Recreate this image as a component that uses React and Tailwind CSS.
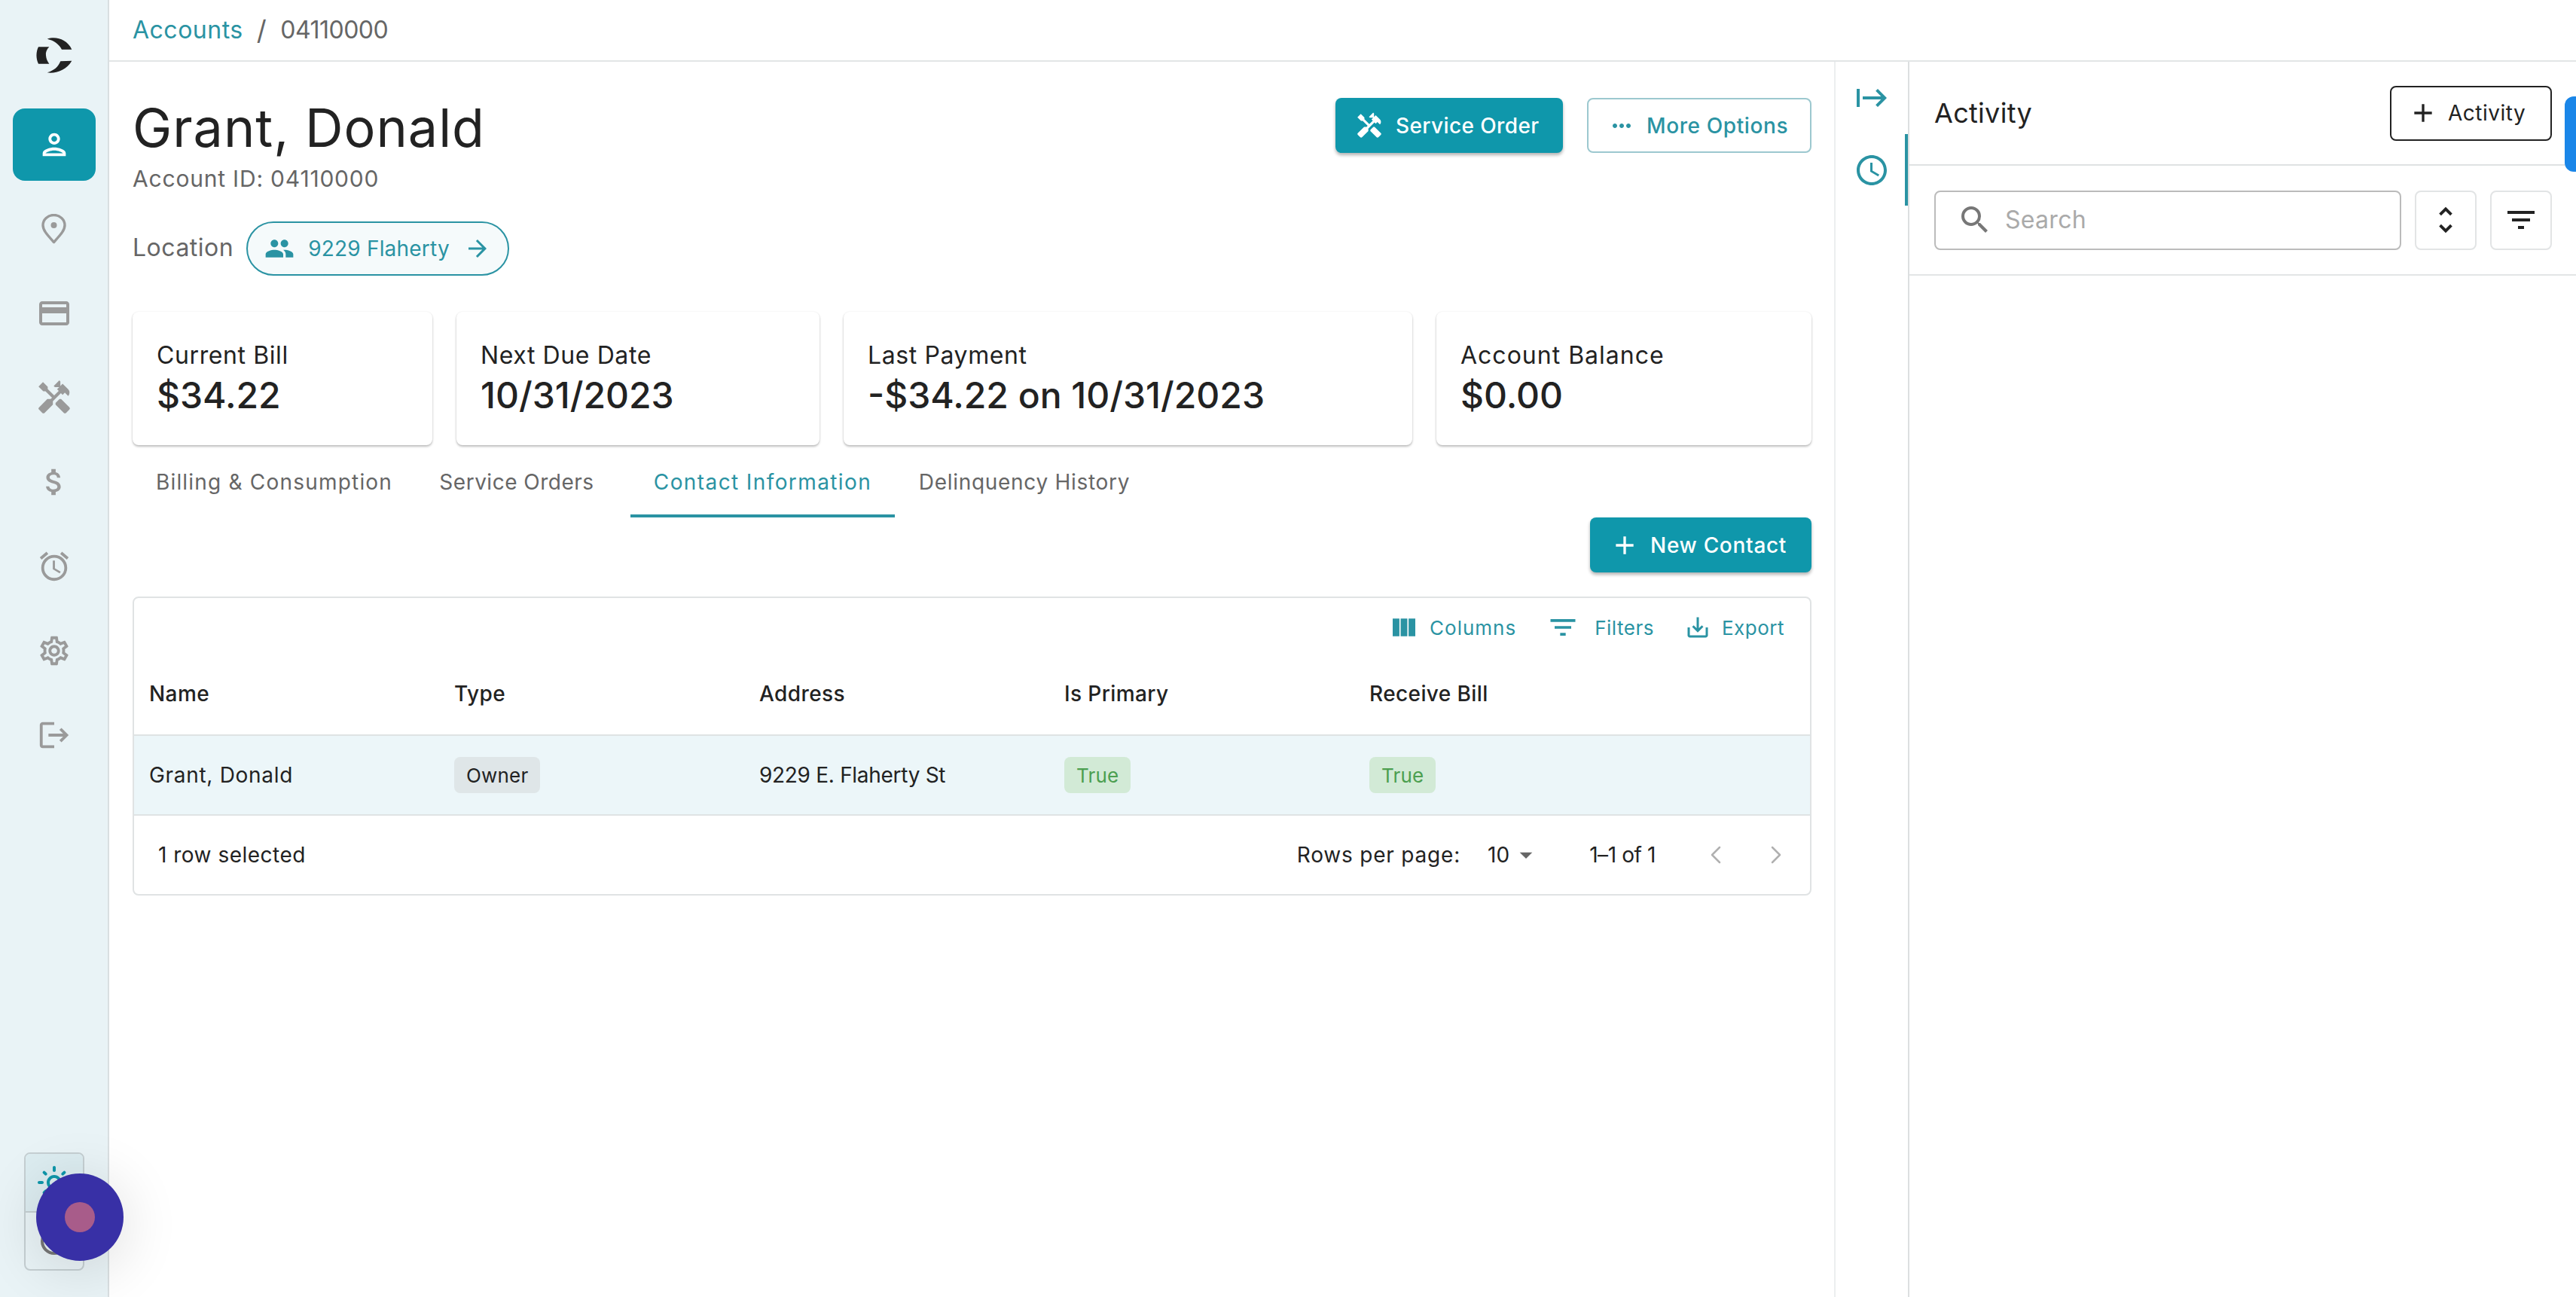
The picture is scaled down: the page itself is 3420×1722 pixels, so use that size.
import React from "react";
import {
  MdOutlinePerson, MdOutlineCreditCard, MdHandyman, MdAttachMoney, MdOutlineAccessAlarm,
  MdOutlineSettings, MdLogout, MdMoreHoriz, MdPeople, MdArrowForward, MdStart, MdAccessTime, MdAdd, MdSearch,
  MdUnfoldMore, MdFilterList, MdViewColumn, MdSaveAlt, MdArrowDropDown,
  MdOutlineLightMode, MdOutlineDarkMode,
} from "react-icons/md";
import { ChevronLeft, ChevronRight } from "lucide-react";

const Logo = () => (
  <svg viewBox="50 55 150 150" className="w-[50px] h-[50px]" fill="#222">
    <path d="M62 98 L105 98 C95 108 90 120 92 132 C93 145 98 155 105 165 L62 165 C52 145 52 118 62 98 Z" />
    <path d="M97 66 C130 55 175 65 195 108 L155 108 C145 88 125 72 97 66 Z" />
    <path d="M97 200 C130 205 175 190 195 153 L150 155 C140 178 125 192 97 200 Z" />
  </svg>
);

const Pin = () => (
  <svg viewBox="0 0 33 40" className="w-[33px] h-[40px]" fill="none" stroke="currentColor" strokeWidth="3.4">
    <path d="M16.5 37.5 C8 28 2 22 2 15 A14.5 13.5 0 0 1 31 15 C31 22 25 28 16.5 37.5 Z" strokeLinejoin="round" />
    <circle cx="16.5" cy="15" r="4" fill="currentColor" stroke="none" />
  </svg>
);

const Nav = ({ icon: Icon, active, size = "text-[46px]" }) => (
  <div className={`flex items-center justify-center w-[110px] h-[96px] rounded-2xl ${size} ${active ? "bg-[#0f97ab] text-white" : "text-[#9a9a9a]"}`}>
    <Icon />
  </div>
);

const Stat = ({ label, value, track = "tracking-[0.6px]" }) => (
  <div className="rounded-lg bg-white shadow-[0_2px_3px_rgba(0,0,0,0.25),0_0_2px_rgba(0,0,0,0.08)] pl-8 pt-[36px] h-[177px]">
    <div className={`text-[32px] leading-[44px] text-[#222] ${track}`}>{label}</div>
    <div className="text-[48px] leading-[62px] font-medium text-[#222]">{value}</div>
  </div>
);

const Chip = ({ children, cls }) => (
  <span className={`inline-flex items-center h-[48px] px-[16px] rounded-lg text-[26px] tracking-[0.2px] ${cls}`}>{children}</span>
);

const Tool = ({ icon: Icon, label, gap = "gap-[14px]", size = "text-[40px]", track = "tracking-[0.5px]" }) => (
  <div className={`flex items-center ${gap} text-[#2a93a3] text-[26px] ${track}`}>
    <Icon className={size} />
    <span>{label}</span>
  </div>
);

export default function App() {
  return (
    <div className="relative flex w-[3420px] h-[1722px] overflow-hidden bg-white font-['Inter',sans-serif] text-[#222]">
      {/* sidebar */}
      <aside className="w-[145px] shrink-0 h-full bg-[#e9f3f6] border-r-2 border-[#d9dfe1] flex flex-col items-center">
        <div className="h-[144px] pt-[48px] flex justify-center"><Logo /></div>
        <div className="flex flex-col gap-4">
          <Nav icon={MdOutlinePerson} active />
          <Nav icon={Pin} />
          <Nav icon={MdOutlineCreditCard} size="text-[48px]" />
          <Nav icon={MdHandyman} size="text-[50px]" />
          <Nav icon={MdAttachMoney} />
          <Nav icon={MdOutlineAccessAlarm} />
          <Nav icon={MdOutlineSettings} />
          <Nav icon={MdLogout} />
        </div>
        <div className="mt-auto mb-[35px] w-[80px] h-[157px] rounded-lg border-2 border-[#c5cfd2] flex flex-col overflow-hidden">
          <div className="h-[78px] bg-[#dcecf0] border-b-2 border-[#c5cfd2] flex items-center justify-center text-[#0f97ab] text-[48px]"><MdOutlineLightMode /></div>
          <div className="flex-1 flex items-center justify-center text-[#777] text-[48px]"><MdOutlineDarkMode /></div>
        </div>
      </aside>

      <div className="flex-1 flex flex-col min-w-0">
        {/* breadcrumb */}
        <header className="h-[82px] shrink-0 border-b-2 border-[#e2e5e6] flex items-center pl-[31px] text-[32px] tracking-[0.5px]">
          <span className="text-[#2a93a3]">Accounts</span>
          <span className="text-[#666] mx-[18px] text-[36px]">/</span>
          <span className="text-[#666] tracking-[-0.5px]">04110000</span>
        </header>

        <div className="flex-1 flex min-h-0">
          {/* main */}
          <main className="w-[2292px] shrink-0 border-r-2 border-[#eceeef] pl-[31px] pr-[30px]">
            <div className="flex justify-between">
              <div>
                <h1 className="text-[70px] leading-[80px] mt-[48px] font-normal tracking-[1px] text-[#222]">Grant, Donald</h1>
                <div className="text-[30px] leading-[36px] mt-[9px] text-[#666] tracking-[0.8px]">Account ID: 04110000</div>
              </div>
              <div className="flex gap-8 mt-[48px]">
                <button className="flex items-center gap-[16px] w-[302px] h-[73px] pl-[26px] rounded-lg bg-[#0f97ab] text-white text-[28px] font-medium tracking-[0.4px] shadow-[0_3px_4px_rgba(0,0,0,0.3)]">
                  <MdHandyman className="text-[38px]" />Service Order
                </button>
                <button className="flex items-center gap-[15px] w-[298px] h-[73px] pl-[26px] rounded-lg border-2 border-[#9cc8cf] text-[#2a93a3] text-[28px] font-medium tracking-[0.6px]">
                  <MdMoreHoriz className="text-[36px]" />More Options
                </button>
              </div>
            </div>

            <div className="flex items-center mt-[39px] h-[72px]">
              <span className="text-[32px] text-[#666] tracking-[0.5px] mr-[17px] -mt-[3px]">Location</span>
              <div className="flex items-center w-[349px] h-[72px] pl-[22px] rounded-full border-2 border-[#2a93a3] bg-[#f5fafb] text-[#2a93a3] text-[28px]">
                <MdPeople className="text-[40px] mr-[18px]" />
                <span className="tracking-[0.2px]">9229 Flaherty</span>
                <MdArrowForward className="text-[36px] ml-auto mr-[22px]" />
              </div>
            </div>

            <div className="grid grid-cols-[398px_482px_755px_498px] gap-8 mt-[48px]">
              <Stat label="Current Bill" value="$34.22" />
              <Stat label="Next Due Date" value="10/31/2023" />
              <Stat label="Last Payment" value="-$34.22 on 10/31/2023" />
              <Stat label="Account Balance" value="$0.00" track="tracking-[1px]" />
            </div>

            <div className="flex mt-[1px] h-[95px] text-[28px] text-[#666]">
              <div className="w-[376px] flex items-center justify-center tracking-[1.2px]">Billing &amp; Consumption</div>
              <div className="w-[268px] flex items-center justify-center tracking-[0.5px]">Service Orders</div>
              <div className="ml-[17px] w-[351px] flex items-center justify-center pt-[4px] text-[#2a93a3] border-b-4 border-[#2a93a3] tracking-[1.4px]">Contact Information</div>
              <div className="w-[344px] flex items-center justify-center tracking-[0.7px]">Delinquency History</div>
            </div>

            <div className="flex justify-end">
              <button className="flex items-center gap-[14px] w-[294px] h-[73px] pl-[26px] rounded-lg bg-[#0f97ab] text-white text-[28px] font-medium tracking-[0.7px] shadow-[0_3px_4px_rgba(0,0,0,0.3)]">
                <MdAdd className="text-[40px]" />New Contact
              </button>
            </div>

            {/* table */}
            <div className="mt-[32px] rounded-lg border-2 border-[#e0e3e4]">
              <div className="h-[78px] flex items-center justify-end gap-[40px] pr-[34px]">
                <Tool icon={MdViewColumn} label="Columns" track="tracking-[1px]" />
                <Tool icon={MdFilterList} label="Filters" gap="gap-[20px]" size="text-[44px]" />
                <Tool icon={MdSaveAlt} label="Export" size="text-[36px]" />
              </div>
              <div className="grid grid-cols-[405px_405px_405px_405px_1fr] pl-[20px] pb-[5px] h-[105px] items-center text-[28px] font-medium tracking-[0.4px] border-b-2 border-[#dfe3e4]">
                <div>Name</div><div>Type</div><div>Address</div><div>Is Primary</div><div>Receive Bill</div>
              </div>
              <div className="grid grid-cols-[405px_405px_405px_405px_1fr] pl-[20px] h-[106px] items-center text-[28px] bg-[#ecf6f9] border-b-2 border-[#dfe3e4]">
                <div className="tracking-[0.7px]">Grant, Donald</div>
                <div><Chip cls="bg-[#dfe6e8] text-[#222]">Owner</Chip></div>
                <div className="tracking-[-0.3px]">9229 E. Flaherty St</div>
                <div><Chip cls="bg-[#d2ead6] text-[#4c9f50]">True</Chip></div>
                <div><Chip cls="bg-[#d2ead6] text-[#4c9f50]">True</Chip></div>
              </div>
              <div className="h-[104px] flex items-center pl-[32px] pr-[25px] text-[28px]">
                <span className="tracking-[0.5px]">1 row selected</span>
                <span className="ml-auto tracking-[0.8px]">Rows per page:</span>
                <span className="ml-[36px]">10</span>
                <MdArrowDropDown className="text-[40px] text-[#666] ml-[2px]" />
                <span className="ml-[64px] tracking-[-0.4px]">1–1 of 1</span>
                <ChevronLeft size={40} strokeWidth={1.5} className="text-[#b0b0b0] ml-[60px]" />
                <ChevronRight size={40} strokeWidth={1.5} className="text-[#b0b0b0] ml-[40px]" />
              </div>
            </div>
          </main>

          {/* rail */}
          <div className="w-[98px] shrink-0 border-r-2 border-[#dcdfe0] flex flex-col items-center relative">
            <MdStart className="text-[#2a93a3] text-[48px] mt-[24px]" />
            <div className="self-stretch h-[95px] mt-[24px] pl-[4px] border-r-4 border-[#2a93a3] flex items-center justify-center text-[#2a93a3]">
              <MdAccessTime className="text-[48px]" />
            </div>
          </div>

          {/* activity */}
          <section className="flex-1 min-w-0 relative">
            <div className="h-[138px] border-b-2 border-[#dfe2e3] flex items-center justify-between pl-[33px] pr-[32px]">
              <span className="text-[36px] font-normal tracking-[0.3px]">Activity</span>
              <button className="flex items-center gap-[13px] w-[215px] h-[73px] pl-[22px] rounded-lg border-2 border-[#222] text-[28px] tracking-[0.5px]">
                <MdAdd className="text-[40px]" />Activity
              </button>
            </div>
            <div className="h-[146px] border-b-2 border-[#e3e5e6] flex items-center pl-[33px] pr-[32px] gap-[18px]">
              <div className="flex-1 h-[79px] rounded-lg border-2 border-[#bbbbbb] flex items-center pl-[28px] gap-[16px] text-[#aaaaaa] text-[32px] tracking-[0.3px]">
                <MdSearch className="text-[48px] text-[#777]" />Search
              </div>
              <div className="w-[82px] h-[79px] rounded-lg border-2 border-[#e2e4e5] flex items-center justify-center text-[46px]"><MdUnfoldMore /></div>
              <div className="w-[82px] h-[79px] rounded-lg border-2 border-[#e2e4e5] flex items-center justify-center text-[48px]"><MdFilterList /></div>
            </div>
            <div className="absolute right-0 top-[46px] w-[15px] h-[100px] rounded-l-xl bg-[#1a86e8]" />
          </section>
        </div>
      </div>

      {/* floating launcher */}
      <div className="absolute left-[48px] top-[1558px] w-[116px] h-[116px] rounded-full bg-[#3830a6] flex items-center justify-center shadow-[0_10px_80px_rgba(0,0,0,0.14)]">
        <div className="w-[40px] h-[40px] rounded-full bg-[#a85c8a]" />
      </div>
    </div>
  );
}
